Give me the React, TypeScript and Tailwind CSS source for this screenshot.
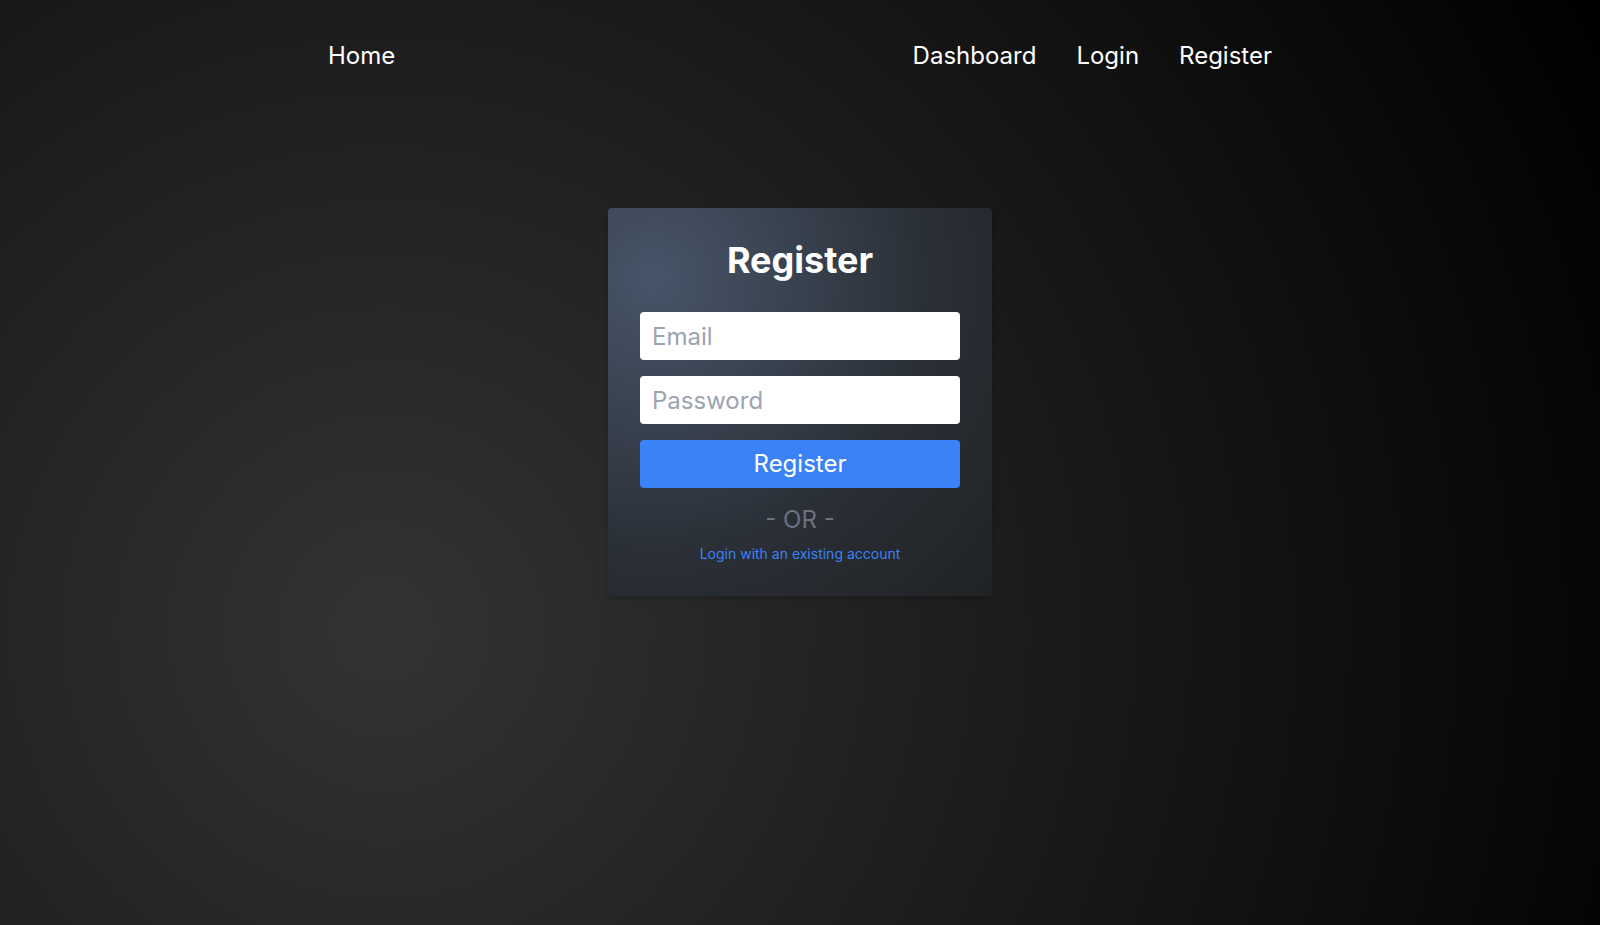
export default function App() {
  return (
    <div className="min-h-screen w-full bg-[radial-gradient(circle_farthest-corner_at_24%_68%,#333333_0%,#000000_100%)] font-['Inter','Liberation_Sans',sans-serif] text-white">
      <nav className="mx-auto flex max-w-[944px] items-center justify-between pt-10 text-2xl">
        <a href="#">Home</a>
        <div className="flex gap-10">
          <a href="#">Dashboard</a>
          <a href="#">Login</a>
          <a href="#">Register</a>
        </div>
      </nav>

      <div className="mt-[136px] flex justify-center">
        <form className="w-96 rounded bg-[radial-gradient(circle_farthest-corner_at_12%_18%,#475569_0%,#2a2f36_60%,#202224_100%)] p-8 shadow-md">
          <h1 className="text-center text-4xl font-bold">Register</h1>
          <div className="mt-8 flex flex-col gap-4">
            <input
              type="email"
              placeholder="Email"
              className="h-12 w-full rounded bg-white px-3 text-2xl text-[#111827] placeholder:text-[#9ca3af] outline-none"
            />
            <input
              type="password"
              placeholder="Password"
              className="h-12 w-full rounded bg-white px-3 text-2xl text-[#111827] placeholder:text-[#9ca3af] outline-none"
            />
            <button type="button" className="h-12 w-full rounded bg-[#3b82f6] text-2xl text-white">
              Register
            </button>
          </div>
          <p className="mt-4 text-center text-2xl text-[#6b7280]">- OR -</p>
          <p className="mt-2 text-center text-sm">
            <a href="#" className="text-[#3b82f6]">
              Login with an existing account
            </a>
          </p>
        </form>
      </div>
    </div>
  );
}
